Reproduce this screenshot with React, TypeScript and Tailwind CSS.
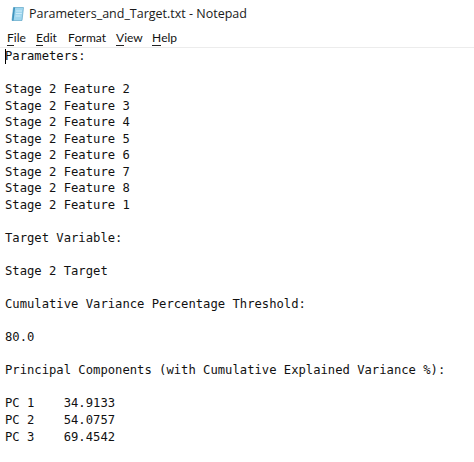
const lines = [
  'Parameters:',
  '',
  'Stage 2 Feature 2',
  'Stage 2 Feature 3',
  'Stage 2 Feature 4',
  'Stage 2 Feature 5',
  'Stage 2 Feature 6',
  'Stage 2 Feature 7',
  'Stage 2 Feature 8',
  'Stage 2 Feature 1',
  '',
  'Target Variable:',
  '',
  'Stage 2 Target',
  '',
  'Cumulative Variance Percentage Threshold:',
  '',
  '80.0',
  '',
  'Principal Components (with Cumulative Explained Variance %):',
  '',
  'PC 1    34.9133',
  'PC 2    54.0757',
  'PC 3    69.4542',
];

const NotepadIcon = () => (
  <svg width="15" height="16" viewBox="0 0 15 16">
    <path d="M3.5 1.5h10l-1.5 13h-10z" fill="#9fd6ee" stroke="#5ea6c8" strokeWidth="0.7" />
    <path d="M3.5 1.5l-1.5 13h1.6l1.5-13z" fill="#3f93bd" />
    <path d="M6 5h6M5.8 7.5h6M5.5 10h5" stroke="#d9f1fb" strokeWidth="0.8" />
  </svg>
);

const Menu = ({ label, u, w }: { label: string; u: number; w: string }) => (
  <span className={`${w} flex items-start`}>
    {label.split('').map((c, i) => (
      <span key={i} className={i === u ? 'inline-block leading-[14px] border-b border-[#222]' : 'inline-block leading-[14px] border-b border-transparent'}>{c}</span>
    ))}
  </span>
);

export default function App() {
  return (
    <div className="w-[474px] h-[462px] bg-white overflow-hidden flex flex-col">
      <div className="h-[28px] shrink-0 flex items-center pl-[10px] gap-[4px] text-[12.5px] text-[#1a1a1a]" style={{ fontFamily: '"Open Sans", "Noto Sans", sans-serif' }}>
        <NotepadIcon />
        <span>Parameters_and_Target.txt - Notepad</span>
      </div>
      <div className="h-[20px] shrink-0 flex items-center pl-[7px] pt-[2px] text-[12px] text-[#111] border-b border-[#ececec]" style={{ fontFamily: 'Lato, "Open Sans", sans-serif' }}>
        <Menu label="File" u={0} w="w-[29px] shrink-0" />
        <Menu label="Edit" u={0} w="w-[32px] shrink-0" />
        <Menu label="Format" u={1} w="w-[48px] shrink-0" />
        <Menu label="View" u={0} w="w-[36px] shrink-0" />
        <Menu label="Help" u={0} w="w-[30px] shrink-0" />
      </div>
      <pre className="relative pl-[5px] text-[12.2px] leading-[16.55px] text-[#111]" style={{ fontFamily: '"DejaVu Sans Mono", "Liberation Mono", monospace', tabSize: 8 }}>
        <span className="absolute left-[5px] top-[1px] w-px h-[15px] bg-black" />
        {lines.join('\n')}
      </pre>
    </div>
  );
}
